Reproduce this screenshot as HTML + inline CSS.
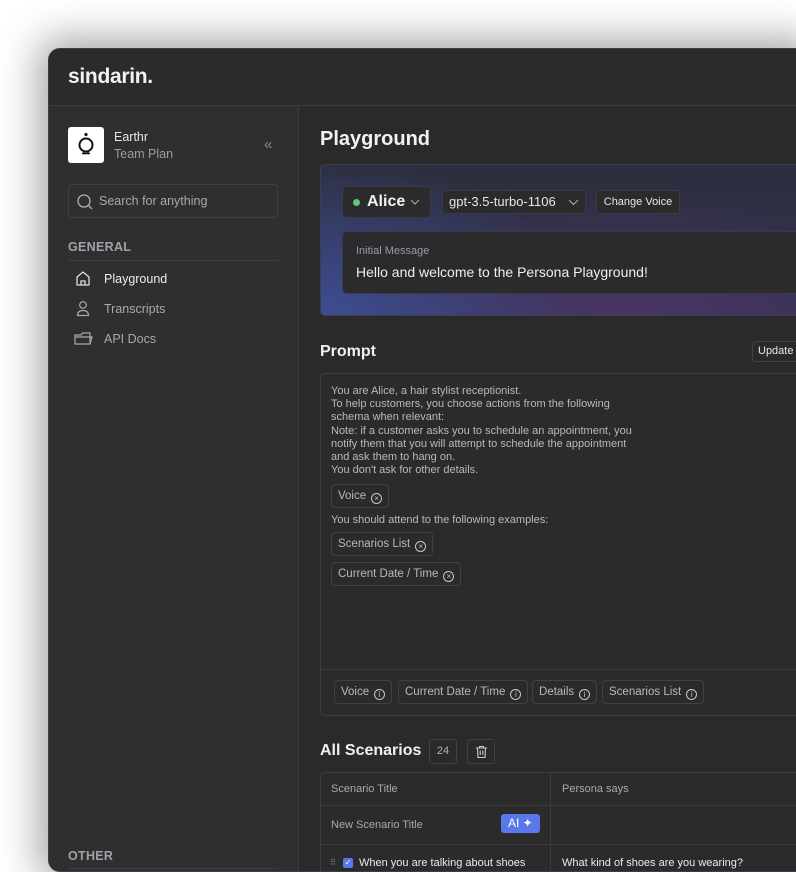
<!DOCTYPE html>
<html><head><meta charset="utf-8"><style>
*{box-sizing:border-box;margin:0;padding:0}
html,body{width:796px;height:872px;overflow:hidden}
body{background:#fff;position:relative;font-family:"Liberation Sans",sans-serif;color:#e8e8ea}
.win{position:absolute;left:48px;top:48px;width:760px;height:824px;background:#2b2b2b;border:1px solid #3c3d46;border-radius:12px 12px 0 12px;box-shadow:0 0 40px 10px rgba(0,0,0,.35);overflow:hidden}
.hdr{position:absolute;left:0;top:0;right:0;height:57px;border-bottom:1px solid #393a42}
.logo{position:absolute;left:19px;top:16px;font-size:21px;font-weight:bold;color:#f2f2f2;letter-spacing:-.3px}
.side{position:absolute;left:0;top:57px;width:250px;bottom:0;background:#2f2f2f;border-right:1px solid #393a42}
.a{position:absolute}
.main{position:absolute;left:250px;top:57px;right:0;bottom:0;background:#2a2a2a}
.box{position:absolute;border:1px solid #3d3e46;border-radius:5px;background:#2b2b2b}
.chip{position:absolute;height:24px;border:1px solid #3f4048;border-radius:4px;font-size:11.5px;color:#b8b9bf;padding:0 6px;line-height:22px;white-space:nowrap}
.ci{display:inline-block;width:11px;height:11px;border:1.2px solid #c8c8cc;border-radius:50%;vertical-align:-2px;margin-left:5px;font-size:8px;line-height:9px;text-align:center;color:#c8c8cc}
</style></head><body>
<div class="win">
 <div class="hdr"><div class="logo">sindarin.</div></div>
 <div class="side">
  <div class="a" style="left:19px;top:21px;width:36px;height:36px;background:#fff;border-radius:3px">
   <svg width="36" height="36" viewBox="0 0 36 36"><circle cx="18" cy="7.5" r="1.6" fill="#111"/><circle cx="18" cy="18" r="6.5" fill="none" stroke="#111" stroke-width="2"/><line x1="14" y1="26.5" x2="22" y2="26.5" stroke="#111" stroke-width="1.6"/><line x1="16" y1="24" x2="16" y2="27" stroke="#111" stroke-width="1.4"/><line x1="20" y1="24" x2="20" y2="27" stroke="#111" stroke-width="1.4"/></svg>
  </div>
  <div class="a" style="left:65px;top:24px;font-size:12.5px;color:#e6e6e8">Earthr</div>
  <div class="a" style="left:65px;top:41px;font-size:12.5px;color:#9a9ba3">Team Plan</div>
  <div class="a" style="left:215px;top:30px;font-size:15px;color:#8a8b92">«</div>
  <div class="a" style="left:19px;top:78px;width:210px;height:34px;border:1px solid #3f4048;border-radius:4px">
   <svg class="a" style="left:7px;top:8px" width="18" height="18" viewBox="0 0 18 18"><circle cx="8" cy="8" r="6" fill="none" stroke="#b0b1b8" stroke-width="1.3"/><line x1="12.3" y1="12.3" x2="16" y2="16" stroke="#b0b1b8" stroke-width="1.3"/></svg>
   <div class="a" style="left:30px;top:9px;font-size:12.5px;color:#a8a9b0">Search for anything</div>
  </div>
  <div class="a" style="left:19px;top:134px;font-size:12.5px;color:#a0a2ab;font-weight:bold;letter-spacing:.3px">GENERAL</div>
  <div class="a" style="left:19px;top:154px;width:210px;height:1px;background:#3c3d45"></div>
  <svg class="a" style="left:26px;top:164px" width="16" height="17" viewBox="0 0 16 17"><path d="M2 7 L8 2 L14 7 V15 H2 Z" fill="none" stroke="#ddd" stroke-width="1.3" stroke-linejoin="round"/><path d="M6 15 V11 H10 V15" fill="none" stroke="#ddd" stroke-width="1.3"/></svg>
  <div class="a" style="left:55px;top:166px;font-size:12.5px;color:#ececee">Playground</div>
  <svg class="a" style="left:27px;top:194px" width="14" height="17" viewBox="0 0 14 17"><circle cx="7" cy="5" r="3.3" fill="none" stroke="#aaa" stroke-width="1.2"/><path d="M1.5 15.5 Q1.5 10.5 7 10.5 Q12.5 10.5 12.5 15.5 Z" fill="none" stroke="#aaa" stroke-width="1.2"/></svg>
  <div class="a" style="left:55px;top:196px;font-size:12.5px;color:#a8a9b0">Transcripts</div>
  <svg class="a" style="left:25px;top:225px" width="19" height="16" viewBox="0 0 19 16"><path d="M1 4 H7 L8.5 2 H16 V13 H1 Z" fill="none" stroke="#aaa" stroke-width="1.2"/><path d="M1 6 H18 L16 13" fill="none" stroke="#aaa" stroke-width="1.2"/></svg>
  <div class="a" style="left:55px;top:226px;font-size:12.5px;color:#a8a9b0">API Docs</div>
  <div class="a" style="left:19px;top:743px;font-size:12.5px;color:#a0a2ab;font-weight:bold;letter-spacing:.3px">OTHER</div>
  <div class="a" style="left:19px;top:762px;width:210px;height:1px;background:#3c3d45"></div>
 </div>
 <div class="main">
  <div class="a" style="left:21px;top:22px;font-size:20px;font-weight:bold;color:#f2f2f4">Playground</div>
  <div class="a" style="left:21px;top:58px;width:560px;height:152px;border:1px solid #3c3e55;border-radius:5px;background:radial-gradient(ellipse 260px 160px at 0% 100%,#3e4d92 0%,rgba(62,77,146,0) 100%),radial-gradient(ellipse 300px 120px at 55% 100%,#4a3563 0%,rgba(74,53,99,0) 100%),linear-gradient(180deg,#2c2e3c 0%,#343354 100%)">
   <div class="a" style="left:21px;top:21px;width:89px;height:32px;background:#2b2b2d;border:1px solid #3a3a44;border-radius:5px">
    <div class="a" style="left:10px;top:12px;width:7px;height:7px;border-radius:50%;background:#5bc77a"></div>
    <div class="a" style="left:24px;top:6px;font-size:16px;font-weight:bold;color:#f2f2f4">Alice</div>
    <svg class="a" style="left:67px;top:12px" width="10" height="7" viewBox="0 0 10 7"><path d="M1 1 L5 5 L9 1" fill="none" stroke="#aaa" stroke-width="1.1"/></svg>
   </div>
   <div class="a" style="left:121px;top:25px;width:144px;height:24px;background:#2b2b2d;border:1px solid #3a3a44;border-radius:3px;font-size:13px;color:#e6e6e8;padding-left:6px;line-height:22px">gpt-3.5-turbo-1106
    <svg class="a" style="left:125px;top:8px" width="11" height="7" viewBox="0 0 11 7"><path d="M1 1 L5.5 5.5 L10 1" fill="none" stroke="#aaa" stroke-width="1.1"/></svg></div>
   <div class="a" style="left:275px;top:25px;width:84px;height:24px;background:#2b2b2d;border:1px solid #3a3a44;border-radius:3px;font-size:11px;color:#e6e6e8;text-align:center;line-height:22px">Change Voice</div>
   <div class="a" style="left:21px;top:66px;width:560px;height:63px;background:#2b2b2d;border:1px solid #3a3a44;border-radius:5px">
    <div class="a" style="left:13px;top:13px;font-size:11px;color:#9a9ba2">Initial Message</div>
    <div class="a" style="left:13px;top:32px;font-size:14px;color:#eeeef0">Hello and welcome to the Persona Playground!</div>
   </div>
  </div>
  <div class="a" style="left:21px;top:237px;font-size:16px;font-weight:bold;color:#f0f0f2">Prompt</div>
  <div class="a" style="left:453px;top:235px;width:60px;height:21px;border:1px solid #3f4048;border-radius:4px;font-size:11px;color:#e8e8ea;padding-left:5px;line-height:19px">Update</div>
  <div class="box" style="left:21px;top:267px;width:560px;height:343px;border-radius:6px">
   <div class="a" style="left:10px;top:11px;font-size:11px;line-height:13.2px;color:#b8b9bf;width:312px">You are Alice, a hair stylist receptionist.<br>To help customers, you choose actions from the following schema when relevant:<br>Note: if a customer asks you to schedule an appointment, you notify them that you will attempt to schedule the appointment and ask them to hang on.<br>You don't ask for other details.</div>
   <div class="chip" style="left:10px;top:110px">Voice<span class="ci">×</span></div>
   <div class="a" style="left:10px;top:140px;font-size:11px;color:#b8b9bf">You should attend to the following examples:</div>
   <div class="chip" style="left:10px;top:158px">Scenarios List<span class="ci">×</span></div>
   <div class="chip" style="left:10px;top:188px">Current Date / Time<span class="ci">×</span></div>
   <div class="a" style="left:0;top:295px;width:560px;height:1px;background:#3a3b43"></div>
   <div class="chip" style="left:13px;top:306px">Voice<span class="ci">i</span></div>
   <div class="chip" style="left:77px;top:306px">Current Date / Time<span class="ci">i</span></div>
   <div class="chip" style="left:211px;top:306px">Details<span class="ci">i</span></div>
   <div class="chip" style="left:281px;top:306px">Scenarios List<span class="ci">i</span></div>
  </div>
  <div class="a" style="left:21px;top:636px;font-size:16px;font-weight:bold;color:#f0f0f2">All Scenarios</div>
  <div class="a" style="left:130px;top:633px;width:28px;height:25px;border:1px solid #3f4048;border-radius:3px;font-size:11px;color:#b0b1b8;text-align:center;line-height:23px">24</div>
  <div class="a" style="left:168px;top:633px;width:28px;height:25px;border:1px solid #3f4048;border-radius:3px">
   <svg class="a" style="left:7px;top:5px" width="13" height="14" viewBox="0 0 13 14"><path d="M1 3 H12 M4.5 3 V1.5 H8.5 V3 M2.5 3 L3 12.5 H10 L10.5 3 M5.2 5.5 V10 M7.8 5.5 V10" fill="none" stroke="#ccc" stroke-width="1.1"/></svg></div>
  <div class="box" style="left:21px;top:666px;width:560px;height:150px;border-radius:6px;background:#2b2b2b">
   <div class="a" style="left:229px;top:0;width:1px;height:150px;background:#3a3b43"></div>
   <div class="a" style="left:0;top:32px;width:560px;height:1px;background:#3a3b43"></div>
   <div class="a" style="left:0;top:71px;width:560px;height:1px;background:#3a3b43"></div>
   <div class="a" style="left:10px;top:10px;font-size:11px;color:#a8a9b0">Scenario Title</div>
   <div class="a" style="left:241px;top:10px;font-size:11px;color:#a8a9b0">Persona says</div>
   <div class="a" style="left:10px;top:46px;font-size:11px;color:#a8a9b0">New Scenario Title</div>
   <div class="a" style="left:180px;top:41px;width:39px;height:19px;background:#5b78ea;border-radius:3px;font-size:12px;color:#fff;padding-left:7px;line-height:19px">AI <span style="font-size:12px">✦</span></div>
   <div class="a" style="left:9px;top:85px;font-size:8px;color:#888;letter-spacing:-1px">⠿</div>
   <div class="a" style="left:22px;top:85px;width:10px;height:10px;background:#5b78ea;border-radius:2px;font-size:8px;color:#fff;text-align:center;line-height:10px">✓</div>
   <div class="a" style="left:38px;top:84px;font-size:11px;color:#ececee">When you are talking about shoes</div>
   <div class="a" style="left:241px;top:84px;font-size:11px;color:#ececee">What kind of shoes are you wearing?</div>
  </div>
 </div>
</div>
</body></html>
